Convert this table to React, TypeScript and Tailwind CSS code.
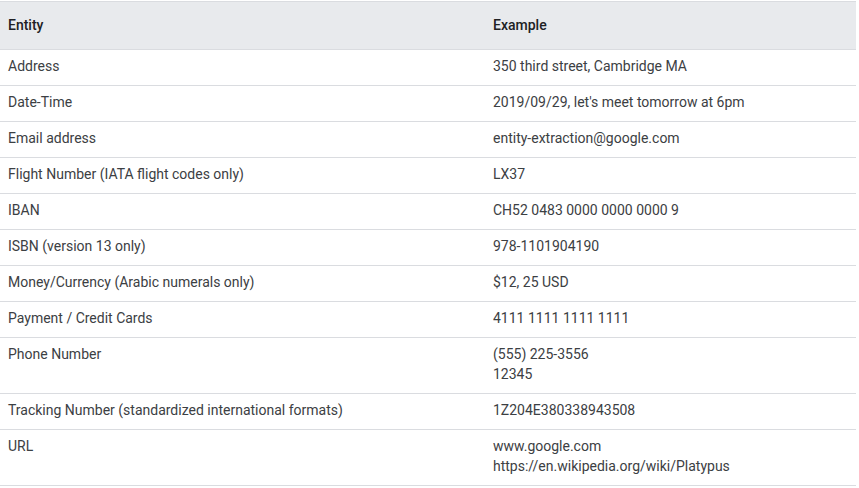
const rows: [string, string[]][] = [
  ["Address", ["350 third street, Cambridge MA"]],
  ["Date-Time", ["2019/09/29, let's meet tomorrow at 6pm"]],
  ["Email address", ["entity-extraction@google.com"]],
  ["Flight Number (IATA flight codes only)", ["LX37"]],
  ["IBAN", ["CH52 0483 0000 0000 0000 9"]],
  ["ISBN (version 13 only)", ["978-1101904190"]],
  ["Money/Currency (Arabic numerals only)", ["$12, 25 USD"]],
  ["Payment / Credit Cards", ["4111 1111 1111 1111"]],
  ["Phone Number", ["(555) 225-3556", "12345"]],
  ["Tracking Number (standardized international formats)", ["1Z204E380338943508"]],
  ["URL", ["www.google.com", "https://en.wikipedia.org/wiki/Platypus"]],
];

export default function App() {
  return (
    <div className="bg-white w-[859px] h-[488px] pt-px font-['Roboto',sans-serif] text-[14px] leading-5 text-[#3c4043]">
      <table className="w-[856px] border-collapse table-fixed">
        <colgroup>
          <col className="w-[485px]" />
          <col />
        </colgroup>
        <thead>
          <tr className="bg-[#e8eaed] border-t border-b border-[#dadce0]">
            <th className="text-left font-medium text-[#202124] pl-2 pt-[13px] pb-[14px]">Entity</th>
            <th className="text-left font-medium text-[#202124] pl-2 pt-[13px] pb-[14px]">Example</th>
          </tr>
        </thead>
        <tbody>
          {rows.map(([entity, examples]) => (
            <tr key={entity} className="border-b border-[#dadce0] align-top">
              <td className="pl-2 pt-[6px] pb-[9px]">{entity}</td>
              <td className="pl-2 pt-[6px] pb-[9px]">
                {examples.map((e) => (
                  <div key={e}>{e}</div>
                ))}
              </td>
            </tr>
          ))}
        </tbody>
      </table>
    </div>
  );
}
